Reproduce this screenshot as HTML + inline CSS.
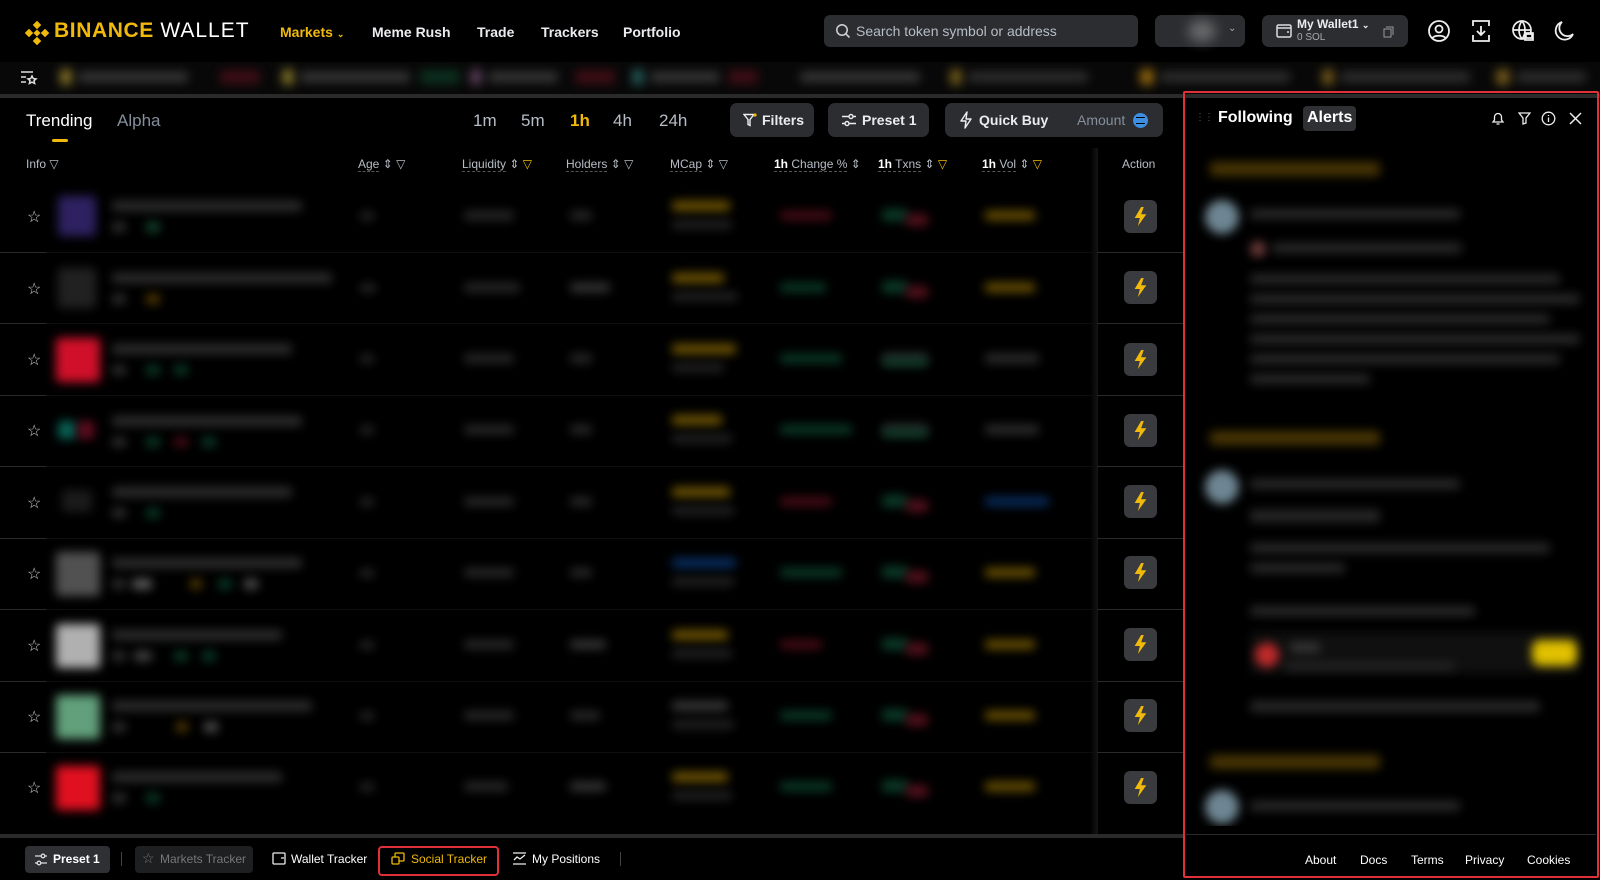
<!DOCTYPE html>
<html><head><meta charset="utf-8">
<style>
*{box-sizing:border-box;margin:0;padding:0}
body{width:1600px;height:880px;background:#000;overflow:hidden;font-family:"Liberation Sans",sans-serif;color:#eaecef;position:relative}
.a{position:absolute}
.b{position:absolute;filter:blur(5px);border-radius:3px;opacity:.8}
.t{position:absolute;font-size:14px;font-weight:bold;white-space:nowrap}
.h{position:absolute;font-size:12px;color:#b7bdc6;white-space:nowrap;top:157px}
.h u{text-decoration:none;border-bottom:1px dashed #555}
.btn{position:absolute;background:#2b2d31;border-radius:7px}
.bolt{position:absolute;left:1124px;width:33px;height:33px;background:#3a3b3e;border-radius:6px}
.bolt::after{content:"";position:absolute;left:10px;top:7px;width:13px;height:19px;background:#f0b90b;clip-path:polygon(55% 0,5% 58%,45% 58%,30% 100%,95% 38%,55% 38%,75% 0)}
.sep{position:absolute;left:0;width:46px;height:1px;background:#2a2a2c}
.sep2{position:absolute;left:1097px;width:86px;height:1px;background:#2a2a2c}
.sm{position:absolute;left:46px;width:1051px;height:1px;background:#0e0e0e}
</style></head><body>

<!-- top nav -->
<svg class="a" style="left:24px;top:20px" width="26" height="26" viewBox="0 0 26 26"><g fill="#f0b90b"><rect x="10" y="2" width="6" height="6" transform="rotate(45 13 5)"/><rect x="10" y="18" width="6" height="6" transform="rotate(45 13 21)"/><rect x="2" y="10" width="6" height="6" transform="rotate(45 5 13)"/><rect x="18" y="10" width="6" height="6" transform="rotate(45 21 13)"/><rect x="10.5" y="10.5" width="5" height="5" transform="rotate(45 13 13)"/></g></svg>
<div class="t" style="left:54px;top:19px;font-size:21px;color:#f0b90b;letter-spacing:0.6px">BINANCE <span style="color:#fff;font-weight:normal;letter-spacing:1px">WALLET</span></div>
<div class="t" style="left:280px;top:24px;color:#f0b90b">Markets <span style="font-size:9px">&#8964;</span></div>
<div class="t" style="left:372px;top:24px">Meme Rush</div>
<div class="t" style="left:477px;top:24px">Trade</div>
<div class="t" style="left:541px;top:24px">Trackers</div>
<div class="t" style="left:623px;top:24px">Portfolio</div>

<div class="btn" style="left:824px;top:15px;width:314px;height:32px;border-radius:6px"></div>
<svg class="a" style="left:835px;top:23px" width="16" height="16" viewBox="0 0 16 16"><circle cx="7" cy="7" r="5.2" stroke="#ccc" stroke-width="1.6" fill="none"/><path d="M11 11l3.5 3.5" stroke="#ccc" stroke-width="1.6"/></svg>
<div class="a" style="left:856px;top:23px;font-size:14px;color:#b7bdc6">Search token symbol or address</div>

<div class="btn" style="left:1155px;top:15px;width:90px;height:32px"></div>
<div class="b" style="left:1188px;top:20px;width:28px;height:22px;background:#777;border-radius:50%;filter:blur(6px)"></div>
<div class="a" style="left:1228px;top:23px;font-size:10px;color:#aaa">&#8964;</div>

<div class="btn" style="left:1262px;top:15px;width:146px;height:32px"></div>
<svg class="a" style="left:1276px;top:24px" width="16" height="14" viewBox="0 0 16 14"><rect x="1" y="1" width="14" height="12" rx="1.5" stroke="#ddd" stroke-width="1.5" fill="none"/><path d="M1 4h14M11 8h2" stroke="#ddd" stroke-width="1.5"/></svg>
<div class="a" style="left:1297px;top:17px;font-size:12px;font-weight:bold">My Wallet1 <span style="font-size:9px">&#8964;</span></div>
<div class="a" style="left:1297px;top:32px;font-size:10px;color:#aaa">0 SOL</div>
<svg class="a" style="left:1383px;top:26px" width="11" height="12" viewBox="0 0 11 12"><rect x="1" y="3" width="7" height="8" stroke="#999" fill="none"/><path d="M3 1h7v8" stroke="#999" fill="none"/></svg>

<svg class="a" style="left:1427px;top:19px" width="24" height="24" viewBox="0 0 24 24" fill="none" stroke="#eee" stroke-width="1.8"><circle cx="12" cy="12" r="10"/><circle cx="12" cy="10" r="3.5"/><path d="M5.5 19c2-3 11-3 13 0"/></svg>
<svg class="a" style="left:1470px;top:19px" width="22" height="24" viewBox="0 0 22 24" fill="none" stroke="#eee" stroke-width="1.8"><path d="M3 7V2h16v5M3 16v6h16v-6M11 7v9M7 12l4 4 4-4"/></svg>
<svg class="a" style="left:1511px;top:19px" width="24" height="24" viewBox="0 0 24 24" fill="none" stroke="#eee" stroke-width="1.7"><circle cx="11" cy="11" r="9"/><path d="M2 11h18M11 2c-4 5-4 13 0 18M11 2c4 5 4 13 0 18"/><rect x="14" y="14" width="8" height="7" fill="#000"/><path d="M15 15h6v4h-6z"/></svg>
<svg class="a" style="left:1553px;top:20px" width="22" height="22" viewBox="0 0 22 22" fill="none" stroke="#eee" stroke-width="1.8"><path d="M9 2a9 9 0 1 0 11 12A8 8 0 0 1 9 2z"/></svg>

<!-- ticker bar -->
<div class="a" style="left:0;top:62px;width:1600px;height:32px;background:#080808"></div>
<svg class="a" style="left:20px;top:70px" width="18" height="16" viewBox="0 0 18 16" fill="none" stroke="#ddd" stroke-width="1.5"><path d="M1 2h12M1 7h5M1 12h5"/><path d="M12 6l1.3 2.6 2.7.3-2 1.8.6 2.8-2.6-1.4-2.6 1.4.6-2.8-2-1.8 2.7-.3z"/></svg>
<div class="b" style="left:60px;top:69px;width:12px;height:16px;background:#a08a30"></div>
<div class="b" style="left:78px;top:72px;width:110px;height:10px;background:#444"></div>
<div class="b" style="left:220px;top:70px;width:40px;height:14px;background:#4a0f18"></div>
<div class="b" style="left:282px;top:69px;width:12px;height:16px;background:#9a8a30"></div>
<div class="b" style="left:300px;top:72px;width:110px;height:10px;background:#444"></div>
<div class="b" style="left:420px;top:70px;width:40px;height:14px;background:#0d3a25"></div>
<div class="b" style="left:470px;top:69px;width:12px;height:16px;background:#6a4a6a"></div>
<div class="b" style="left:488px;top:72px;width:70px;height:10px;background:#444"></div>
<div class="b" style="left:575px;top:70px;width:40px;height:14px;background:#4a0f18"></div>
<div class="b" style="left:632px;top:69px;width:12px;height:16px;background:#2a6a6a"></div>
<div class="b" style="left:650px;top:72px;width:70px;height:10px;background:#444"></div>
<div class="b" style="left:728px;top:70px;width:30px;height:14px;background:#4a0f18"></div>
<div class="b" style="left:800px;top:72px;width:120px;height:10px;background:#444"></div>
<div class="b" style="left:950px;top:69px;width:12px;height:16px;background:#8a7020"></div>
<div class="b" style="left:968px;top:72px;width:120px;height:10px;background:#3a3a3a"></div>
<div class="b" style="left:1140px;top:69px;width:14px;height:16px;background:#b07a10"></div>
<div class="b" style="left:1160px;top:72px;width:130px;height:10px;background:#3a3a3a"></div>
<div class="b" style="left:1322px;top:69px;width:12px;height:16px;background:#8a6a20"></div>
<div class="b" style="left:1340px;top:72px;width:130px;height:10px;background:#3a3a3a"></div>
<div class="b" style="left:1496px;top:69px;width:14px;height:16px;background:#8a6a20"></div>
<div class="b" style="left:1516px;top:72px;width:70px;height:10px;background:#3a3a3a"></div>
<div class="a" style="left:0;top:94px;width:1600px;height:4px;background:#2a2a2a"></div>

<!-- tabs -->
<div class="t" style="left:26px;top:111px;font-size:17px;font-weight:normal;color:#fff">Trending</div>
<div class="a" style="left:52px;top:139px;width:16px;height:3px;background:#f0b90b;border-radius:2px"></div>
<div class="t" style="left:117px;top:111px;font-size:17px;font-weight:normal;color:#848e9c">Alpha</div>
<div class="t" style="left:473px;top:111px;font-size:17px;font-weight:normal;color:#b7bdc6">1m</div>
<div class="t" style="left:521px;top:111px;font-size:17px;font-weight:normal;color:#b7bdc6">5m</div>
<div class="t" style="left:570px;top:111px;font-size:17px;color:#f0b90b">1h</div>
<div class="t" style="left:613px;top:111px;font-size:17px;font-weight:normal;color:#b7bdc6">4h</div>
<div class="t" style="left:659px;top:111px;font-size:17px;font-weight:normal;color:#b7bdc6">24h</div>

<div class="btn" style="left:730px;top:103px;width:84px;height:34px"></div>
<svg class="a" style="left:743px;top:113px" width="14" height="14" viewBox="0 0 14 14" fill="none" stroke="#eee" stroke-width="1.4"><path d="M1 1.5h10l-4 5v6l-2-1v-5z"/><circle cx="12" cy="2" r="1.6" fill="#f0b90b" stroke="none"/></svg>
<div class="t" style="left:762px;top:112px">Filters</div>
<div class="btn" style="left:828px;top:103px;width:101px;height:34px"></div>
<svg class="a" style="left:841px;top:113px" width="16" height="14" viewBox="0 0 16 14" fill="none" stroke="#eee" stroke-width="1.4"><path d="M1 3.5h14M1 10.5h14"/><circle cx="10" cy="3.5" r="2" fill="#2b2d31"/><circle cx="6" cy="10.5" r="2" fill="#2b2d31"/></svg>
<div class="t" style="left:862px;top:112px">Preset 1</div>
<div class="btn" style="left:945px;top:103px;width:218px;height:34px"></div>
<svg class="a" style="left:959px;top:111px" width="14" height="18" viewBox="0 0 14 18" fill="none" stroke="#eee" stroke-width="1.4" stroke-linejoin="round"><path d="M8 1L2 10h5l-1 7 6-9H7z"/></svg>
<div class="t" style="left:979px;top:112px">Quick Buy</div>
<div class="a" style="left:1077px;top:112px;font-size:14px;color:#848e9c">Amount</div>
<div class="a" style="left:1133px;top:113px;width:15px;height:15px;border-radius:50%;background:#3d8de0"></div>
<div class="a" style="left:1136px;top:117px;width:9px;height:7px;border-top:1.5px solid #000;border-bottom:1.5px solid #000"></div>

<!-- header row -->
<div class="h" style="left:26px">Info &#x25BD;</div>
<div class="h" style="left:358px"><u>Age</u> &#8661; &#x25BD;</div>
<div class="h" style="left:462px"><u>Liquidity</u> &#8661; <span style="color:#f0b90b">&#x25BD;</span></div>
<div class="h" style="left:566px"><u>Holders</u> &#8661; &#x25BD;</div>
<div class="h" style="left:670px"><u>MCap</u> &#8661; &#x25BD;</div>
<div class="h" style="left:774px"><u><b style="color:#fff">1h</b> Change %</u> &#8661;</div>
<div class="h" style="left:878px"><u><b style="color:#fff">1h</b> Txns</u> &#8661; <span style="color:#f0b90b">&#x25BD;</span></div>
<div class="h" style="left:982px"><u><b style="color:#fff">1h</b> Vol</u> &#8661; <span style="color:#f0b90b">&#x25BD;</span></div>
<div class="h" style="left:1122px">Action</div>
<div class="a" style="left:1090px;top:148px;width:8px;height:686px;background:linear-gradient(90deg,#000,#151515)"></div>

<div class="sep" style="top:252px"></div><div class="sm" style="top:252px"></div><div class="sep2" style="top:252px"></div>
<div class="sep" style="top:323px"></div><div class="sm" style="top:323px"></div><div class="sep2" style="top:323px"></div>
<div class="sep" style="top:395px"></div><div class="sm" style="top:395px"></div><div class="sep2" style="top:395px"></div>
<div class="sep" style="top:466px"></div><div class="sm" style="top:466px"></div><div class="sep2" style="top:466px"></div>
<div class="sep" style="top:538px"></div><div class="sm" style="top:538px"></div><div class="sep2" style="top:538px"></div>
<div class="sep" style="top:609px"></div><div class="sm" style="top:609px"></div><div class="sep2" style="top:609px"></div>
<div class="sep" style="top:681px"></div><div class="sm" style="top:681px"></div><div class="sep2" style="top:681px"></div>
<div class="sep" style="top:752px"></div><div class="sm" style="top:752px"></div><div class="sep2" style="top:752px"></div>

<!-- R1 -->
<div class="a" style="left:27px;top:207px;font-size:16px;color:#ccc">&#9734;</div>
<div class="b" style="left:58px;top:196px;width:38px;height:40px;background:#3a2a7a"></div>
<div class="b" style="left:112px;top:201px;width:190px;height:10px;background:#3a3a3a"></div><div class="b" style="left:112px;top:222px;width:14px;height:10px;background:#3a3a3a"></div><div class="b" style="left:146px;top:222px;width:14px;height:10px;background:#1a5a3a"></div>
<div class="b" style="left:360px;top:212px;width:14px;height:8px;background:#333"></div>
<div class="b" style="left:464px;top:211px;width:50px;height:9px;background:#333"></div>
<div class="b" style="left:570px;top:211px;width:22px;height:9px;background:#333"></div>
<div class="b" style="left:672px;top:201px;width:58px;height:10px;background:#8a6a05"></div><div class="b" style="left:672px;top:220px;width:60px;height:9px;background:#2a2a2a"></div>
<div class="b" style="left:780px;top:211px;width:52px;height:9px;background:#5a0f1c"></div>
<div class="b" style="left:882px;top:209px;width:26px;height:12px;background:#0d4a32"></div><div class="b" style="left:906px;top:214px;width:22px;height:12px;background:#6a1424"></div>
<div class="b" style="left:985px;top:211px;width:50px;height:9px;background:#8a6a05"></div>
<div class="bolt" style="top:200px"></div>
<!-- R2 -->
<div class="a" style="left:27px;top:279px;font-size:16px;color:#ccc">&#9734;</div>
<div class="b" style="left:58px;top:268px;width:38px;height:40px;background:#2a2a2a"></div>
<div class="b" style="left:112px;top:273px;width:220px;height:10px;background:#3a3a3a"></div><div class="b" style="left:112px;top:294px;width:14px;height:10px;background:#3a3a3a"></div><div class="b" style="left:146px;top:294px;width:14px;height:10px;background:#6a4a05"></div>
<div class="b" style="left:360px;top:284px;width:16px;height:8px;background:#333"></div>
<div class="b" style="left:464px;top:283px;width:56px;height:9px;background:#333"></div>
<div class="b" style="left:570px;top:283px;width:40px;height:9px;background:#444"></div>
<div class="b" style="left:672px;top:273px;width:52px;height:10px;background:#8a6a05"></div><div class="b" style="left:672px;top:292px;width:66px;height:9px;background:#2a2a2a"></div>
<div class="b" style="left:780px;top:283px;width:46px;height:9px;background:#0d4a32"></div>
<div class="b" style="left:882px;top:281px;width:26px;height:12px;background:#0d4a32"></div><div class="b" style="left:906px;top:286px;width:22px;height:12px;background:#6a1424"></div>
<div class="b" style="left:985px;top:283px;width:50px;height:9px;background:#8a6a05"></div>
<div class="bolt" style="top:271px"></div>
<!-- R3 -->
<div class="a" style="left:27px;top:350px;font-size:16px;color:#ccc">&#9734;</div>
<div class="b" style="left:56px;top:338px;width:44px;height:44px;background:#d0102a;opacity:1"></div>
<div class="b" style="left:112px;top:344px;width:180px;height:10px;background:#3a3a3a"></div><div class="b" style="left:112px;top:365px;width:14px;height:10px;background:#3a3a3a"></div><div class="b" style="left:146px;top:365px;width:14px;height:10px;background:#0d4a32"></div><div class="b" style="left:174px;top:365px;width:14px;height:10px;background:#0d4a32"></div>
<div class="b" style="left:360px;top:355px;width:14px;height:8px;background:#333"></div>
<div class="b" style="left:464px;top:354px;width:50px;height:9px;background:#333"></div>
<div class="b" style="left:570px;top:354px;width:22px;height:9px;background:#333"></div>
<div class="b" style="left:672px;top:344px;width:64px;height:10px;background:#8a6a05"></div><div class="b" style="left:672px;top:363px;width:52px;height:9px;background:#2a2a2a"></div>
<div class="b" style="left:780px;top:354px;width:62px;height:9px;background:#0d4a32"></div>
<div class="b" style="left:882px;top:352px;width:46px;height:12px;background:#2a2a2a"></div><div class="b" style="left:882px;top:358px;width:46px;height:8px;background:#0d4a32"></div>
<div class="b" style="left:985px;top:354px;width:54px;height:9px;background:#3a3a3a"></div>
<div class="bolt" style="top:343px"></div>
<!-- R4 -->
<div class="a" style="left:27px;top:421px;font-size:16px;color:#ccc">&#9734;</div>
<div class="b" style="left:58px;top:421px;width:18px;height:18px;background:#0a7a6a"></div><div class="b" style="left:78px;top:421px;width:16px;height:18px;background:#7a1028"></div>
<div class="b" style="left:112px;top:416px;width:190px;height:10px;background:#3a3a3a"></div><div class="b" style="left:112px;top:437px;width:14px;height:10px;background:#3a3a3a"></div><div class="b" style="left:146px;top:437px;width:14px;height:10px;background:#0d4a32"></div><div class="b" style="left:174px;top:437px;width:14px;height:10px;background:#5a0f1c"></div><div class="b" style="left:202px;top:437px;width:14px;height:10px;background:#0d4a32"></div>
<div class="b" style="left:360px;top:426px;width:14px;height:8px;background:#333"></div>
<div class="b" style="left:464px;top:425px;width:50px;height:9px;background:#333"></div>
<div class="b" style="left:570px;top:425px;width:22px;height:9px;background:#333"></div>
<div class="b" style="left:672px;top:415px;width:50px;height:10px;background:#8a6a05"></div><div class="b" style="left:672px;top:434px;width:60px;height:9px;background:#2a2a2a"></div>
<div class="b" style="left:780px;top:425px;width:72px;height:9px;background:#0d4a32"></div>
<div class="b" style="left:882px;top:423px;width:46px;height:12px;background:#2a2a2a"></div><div class="b" style="left:882px;top:429px;width:46px;height:8px;background:#0d4a32"></div>
<div class="b" style="left:985px;top:425px;width:54px;height:9px;background:#3a3a3a"></div>
<div class="bolt" style="top:414px"></div>
<!-- R5 -->
<div class="a" style="left:27px;top:493px;font-size:16px;color:#ccc">&#9734;</div>
<div class="b" style="left:62px;top:490px;width:30px;height:22px;background:#222"></div>
<div class="b" style="left:112px;top:487px;width:180px;height:10px;background:#3a3a3a"></div><div class="b" style="left:112px;top:508px;width:14px;height:10px;background:#3a3a3a"></div><div class="b" style="left:146px;top:508px;width:14px;height:10px;background:#0d4a32"></div>
<div class="b" style="left:360px;top:498px;width:14px;height:8px;background:#333"></div>
<div class="b" style="left:464px;top:497px;width:50px;height:9px;background:#333"></div>
<div class="b" style="left:570px;top:497px;width:22px;height:9px;background:#333"></div>
<div class="b" style="left:672px;top:487px;width:58px;height:10px;background:#8a6a05"></div><div class="b" style="left:672px;top:506px;width:62px;height:9px;background:#2a2a2a"></div>
<div class="b" style="left:780px;top:497px;width:52px;height:9px;background:#5a0f1c"></div>
<div class="b" style="left:882px;top:495px;width:26px;height:12px;background:#0d4a32"></div><div class="b" style="left:906px;top:500px;width:22px;height:12px;background:#6a1424"></div>
<div class="b" style="left:985px;top:497px;width:64px;height:9px;background:#0a3a7a"></div>
<div class="bolt" style="top:485px"></div>
<!-- R6 -->
<div class="a" style="left:27px;top:564px;font-size:16px;color:#ccc">&#9734;</div>
<div class="b" style="left:56px;top:552px;width:44px;height:44px;background:#666"></div>
<div class="b" style="left:112px;top:558px;width:190px;height:10px;background:#3a3a3a"></div><div class="b" style="left:112px;top:579px;width:14px;height:10px;background:#3a3a3a"></div><div class="b" style="left:132px;top:579px;width:20px;height:10px;background:#777"></div><div class="b" style="left:190px;top:579px;width:12px;height:10px;background:#6a4a05"></div><div class="b" style="left:218px;top:579px;width:14px;height:10px;background:#0d4a32"></div><div class="b" style="left:244px;top:579px;width:14px;height:10px;background:#666"></div>
<div class="b" style="left:360px;top:569px;width:14px;height:8px;background:#333"></div>
<div class="b" style="left:464px;top:568px;width:50px;height:9px;background:#333"></div>
<div class="b" style="left:570px;top:568px;width:22px;height:9px;background:#333"></div>
<div class="b" style="left:672px;top:558px;width:64px;height:10px;background:#0a3a7a"></div><div class="b" style="left:672px;top:577px;width:62px;height:9px;background:#2a2a2a"></div>
<div class="b" style="left:780px;top:568px;width:62px;height:9px;background:#0d4a32"></div>
<div class="b" style="left:882px;top:566px;width:26px;height:12px;background:#0d4a32"></div><div class="b" style="left:906px;top:571px;width:22px;height:12px;background:#6a1424"></div>
<div class="b" style="left:985px;top:568px;width:50px;height:9px;background:#8a6a05"></div>
<div class="bolt" style="top:556px"></div>
<!-- R7 -->
<div class="a" style="left:27px;top:636px;font-size:16px;color:#ccc">&#9734;</div>
<div class="b" style="left:56px;top:624px;width:44px;height:44px;background:#ddd"></div>
<div class="b" style="left:112px;top:630px;width:170px;height:10px;background:#3a3a3a"></div><div class="b" style="left:112px;top:651px;width:14px;height:10px;background:#3a3a3a"></div><div class="b" style="left:134px;top:651px;width:18px;height:10px;background:#555"></div><div class="b" style="left:174px;top:651px;width:14px;height:10px;background:#0d4a32"></div><div class="b" style="left:202px;top:651px;width:14px;height:10px;background:#0d4a32"></div>
<div class="b" style="left:360px;top:641px;width:14px;height:8px;background:#333"></div>
<div class="b" style="left:464px;top:640px;width:50px;height:9px;background:#333"></div>
<div class="b" style="left:570px;top:640px;width:36px;height:9px;background:#444"></div>
<div class="b" style="left:672px;top:630px;width:56px;height:10px;background:#8a6a05"></div><div class="b" style="left:672px;top:649px;width:60px;height:9px;background:#2a2a2a"></div>
<div class="b" style="left:780px;top:640px;width:42px;height:9px;background:#5a0f1c"></div>
<div class="b" style="left:882px;top:638px;width:26px;height:12px;background:#0d4a32"></div><div class="b" style="left:906px;top:643px;width:22px;height:12px;background:#6a1424"></div>
<div class="b" style="left:985px;top:640px;width:50px;height:9px;background:#8a6a05"></div>
<div class="bolt" style="top:628px"></div>
<!-- R8 -->
<div class="a" style="left:27px;top:707px;font-size:16px;color:#ccc">&#9734;</div>
<div class="b" style="left:56px;top:695px;width:44px;height:44px;background:#7ac89a"></div>
<div class="b" style="left:112px;top:701px;width:200px;height:10px;background:#3a3a3a"></div><div class="b" style="left:112px;top:722px;width:14px;height:10px;background:#3a3a3a"></div><div class="b" style="left:176px;top:722px;width:12px;height:10px;background:#6a4a05"></div><div class="b" style="left:204px;top:722px;width:14px;height:10px;background:#666"></div>
<div class="b" style="left:360px;top:712px;width:14px;height:8px;background:#333"></div>
<div class="b" style="left:464px;top:711px;width:50px;height:9px;background:#333"></div>
<div class="b" style="left:570px;top:711px;width:30px;height:9px;background:#333"></div>
<div class="b" style="left:672px;top:701px;width:56px;height:10px;background:#444"></div><div class="b" style="left:672px;top:720px;width:62px;height:9px;background:#2a2a2a"></div>
<div class="b" style="left:780px;top:711px;width:52px;height:9px;background:#0d4a32"></div>
<div class="b" style="left:882px;top:709px;width:26px;height:12px;background:#0d4a32"></div><div class="b" style="left:906px;top:714px;width:22px;height:12px;background:#6a1424"></div>
<div class="b" style="left:985px;top:711px;width:50px;height:9px;background:#8a6a05"></div>
<div class="bolt" style="top:699px"></div>
<!-- R9 -->
<div class="a" style="left:27px;top:778px;font-size:16px;color:#ccc">&#9734;</div>
<div class="b" style="left:56px;top:766px;width:44px;height:44px;background:#e01020;opacity:1"></div>
<div class="b" style="left:112px;top:772px;width:170px;height:10px;background:#3a3a3a"></div><div class="b" style="left:112px;top:793px;width:14px;height:10px;background:#3a3a3a"></div><div class="b" style="left:146px;top:793px;width:14px;height:10px;background:#0d4a32"></div>
<div class="b" style="left:360px;top:783px;width:14px;height:8px;background:#333"></div>
<div class="b" style="left:464px;top:782px;width:44px;height:9px;background:#333"></div>
<div class="b" style="left:570px;top:782px;width:36px;height:9px;background:#444"></div>
<div class="b" style="left:672px;top:772px;width:56px;height:10px;background:#8a6a05"></div><div class="b" style="left:672px;top:791px;width:60px;height:9px;background:#2a2a2a"></div>
<div class="b" style="left:780px;top:782px;width:52px;height:9px;background:#0d4a32"></div>
<div class="b" style="left:882px;top:780px;width:26px;height:12px;background:#0d4a32"></div><div class="b" style="left:906px;top:785px;width:22px;height:12px;background:#6a1424"></div>
<div class="b" style="left:985px;top:782px;width:50px;height:9px;background:#8a6a05"></div>
<div class="bolt" style="top:771px"></div>

<!-- bottom bar -->
<div class="a" style="left:0;top:834px;width:1183px;height:4px;background:#2a2a2a"></div>
<div class="btn" style="left:25px;top:846px;width:85px;height:27px;border-radius:4px;background:#2f3033"></div>
<svg class="a" style="left:34px;top:853px" width="14" height="13" viewBox="0 0 14 13" fill="none" stroke="#ddd" stroke-width="1.3"><path d="M1 3h12M1 10h12"/><circle cx="9" cy="3" r="1.8" fill="#2f3033"/><circle cx="5" cy="10" r="1.8" fill="#2f3033"/></svg>
<div class="a" style="left:53px;top:852px;font-size:12px;font-weight:bold;color:#fff">Preset 1</div>
<div class="a" style="left:121px;top:852px;width:1px;height:14px;background:#444"></div>
<div class="btn" style="left:135px;top:846px;width:118px;height:27px;border-radius:4px;background:#1e1f21"></div>
<div class="a" style="left:142px;top:850px;font-size:14px;color:#777">&#9734;</div>
<div class="a" style="left:160px;top:852px;font-size:12px;color:#777">Markets Tracker</div>
<svg class="a" style="left:272px;top:852px" width="14" height="13" viewBox="0 0 14 13" fill="none" stroke="#eee" stroke-width="1.3"><rect x="1" y="1" width="12" height="11" rx="1"/><path d="M9 6h3"/></svg>
<div class="a" style="left:291px;top:852px;font-size:12px;color:#fff">Wallet Tracker</div>
<div class="a" style="left:378px;top:846px;width:121px;height:30px;border:2.5px solid #e0303a;border-radius:4px"></div>
<svg class="a" style="left:391px;top:852px" width="14" height="14" viewBox="0 0 14 14" fill="none" stroke="#f0b90b" stroke-width="1.3"><rect x="4" y="1" width="9" height="8" rx="1"/><rect x="1" y="5" width="7" height="7" rx="1" fill="#000"/></svg>
<div class="a" style="left:411px;top:852px;font-size:12px;color:#f0b90b">Social Tracker</div>
<svg class="a" style="left:512px;top:852px" width="15" height="13" viewBox="0 0 15 13" fill="none" stroke="#eee" stroke-width="1.3"><path d="M1 1h13M1 12h13M2 8l3-3 3 2 5-4"/></svg>
<div class="a" style="left:532px;top:852px;font-size:12px;color:#fff">My Positions</div>
<div class="a" style="left:620px;top:852px;width:1px;height:14px;background:#444"></div>

<!-- right panel -->
<div class="a" style="left:1195px;top:112px;font-size:10px;color:#555;letter-spacing:-1px">&#8942;&#8942;</div>
<div class="t" style="left:1218px;top:109px;font-size:16px;color:#fff">Following</div>
<div class="a" style="left:1303px;top:106px;width:53px;height:25px;background:#2f3033;border-radius:4px"></div>
<div class="t" style="left:1307px;top:109px;font-size:16px;color:#fff">Alerts</div>
<svg class="a" style="left:1491px;top:111px" width="14" height="15" viewBox="0 0 14 15" fill="none" stroke="#eee" stroke-width="1.3"><path d="M2 11h10l-1.5-2V6a3.5 3.5 0 0 0-7 0v3zM5.5 13h3"/></svg>
<svg class="a" style="left:1518px;top:112px" width="13" height="13" viewBox="0 0 13 13" fill="none" stroke="#eee" stroke-width="1.3"><path d="M1 1h11L8 6v5l-3 1V6z"/></svg>
<svg class="a" style="left:1541px;top:111px" width="15" height="15" viewBox="0 0 15 15" fill="none" stroke="#eee" stroke-width="1.3"><circle cx="7.5" cy="7.5" r="6.3"/><path d="M7.5 6.5v4.5M7.5 4v1"/></svg>
<svg class="a" style="left:1569px;top:112px" width="13" height="13" viewBox="0 0 13 13" stroke="#eee" stroke-width="1.5"><path d="M1 1l11 11M12 1L1 12"/></svg>

<div class="b" style="left:1210px;top:162px;width:170px;height:14px;background:#5a4205"></div>
<div class="b" style="left:1205px;top:200px;width:34px;height:34px;border-radius:50%;background:#8aa8b8"></div>
<div class="b" style="left:1250px;top:209px;width:210px;height:10px;background:#333"></div>
<div class="b" style="left:1250px;top:241px;width:16px;height:16px;border-radius:50%;background:#8a4a4a"></div>
<div class="b" style="left:1272px;top:243px;width:190px;height:10px;background:#333"></div>
<div class="b" style="left:1250px;top:274px;width:310px;height:10px;background:#333"></div>
<div class="b" style="left:1250px;top:294px;width:330px;height:10px;background:#333"></div>
<div class="b" style="left:1250px;top:314px;width:300px;height:10px;background:#333"></div>
<div class="b" style="left:1250px;top:334px;width:330px;height:10px;background:#333"></div>
<div class="b" style="left:1250px;top:354px;width:310px;height:10px;background:#333"></div>
<div class="b" style="left:1250px;top:374px;width:120px;height:10px;background:#333"></div>
<div class="b" style="left:1210px;top:431px;width:170px;height:14px;background:#5a4205"></div>
<div class="b" style="left:1205px;top:470px;width:34px;height:34px;border-radius:50%;background:#8aa8b8"></div>
<div class="b" style="left:1250px;top:479px;width:210px;height:10px;background:#333"></div>
<div class="b" style="left:1250px;top:510px;width:130px;height:12px;background:#333"></div>
<div class="b" style="left:1250px;top:543px;width:300px;height:10px;background:#333"></div>
<div class="b" style="left:1250px;top:563px;width:95px;height:10px;background:#333"></div>
<div class="b" style="left:1250px;top:606px;width:225px;height:10px;background:#333"></div>
<div class="b" style="left:1250px;top:632px;width:330px;height:42px;background:#141414"></div>
<div class="b" style="left:1255px;top:643px;width:24px;height:24px;border-radius:50%;background:#c02a2a;opacity:1"></div>
<div class="b" style="left:1290px;top:643px;width:30px;height:9px;background:#444"></div>
<div class="b" style="left:1285px;top:662px;width:170px;height:8px;background:#2a2a2a"></div>
<div class="b" style="left:1532px;top:640px;width:45px;height:26px;border-radius:8px;background:#e0c000;opacity:1"></div>
<div class="b" style="left:1250px;top:701px;width:290px;height:11px;background:#333"></div>
<div class="b" style="left:1210px;top:755px;width:170px;height:14px;background:#5a4205"></div>
<div class="b" style="left:1205px;top:790px;width:34px;height:34px;border-radius:50%;background:#8aa8b8"></div>
<div class="b" style="left:1250px;top:801px;width:210px;height:10px;background:#333"></div>
<div class="a" style="left:1186px;top:826px;width:410px;height:50px;background:#000"></div>
<div class="a" style="left:1186px;top:834px;width:410px;height:1px;background:#2a2a2a"></div>
<div class="a" style="left:1305px;top:853px;font-size:12px;color:#fff">About</div>
<div class="a" style="left:1360px;top:853px;font-size:12px;color:#fff">Docs</div>
<div class="a" style="left:1411px;top:853px;font-size:12px;color:#fff">Terms</div>
<div class="a" style="left:1465px;top:853px;font-size:12px;color:#fff">Privacy</div>
<div class="a" style="left:1527px;top:853px;font-size:12px;color:#fff">Cookies</div>
<div class="a" style="left:1183px;top:91px;width:416px;height:787px;border:2.5px solid #e0303a;border-radius:2px"></div>
</body></html>
